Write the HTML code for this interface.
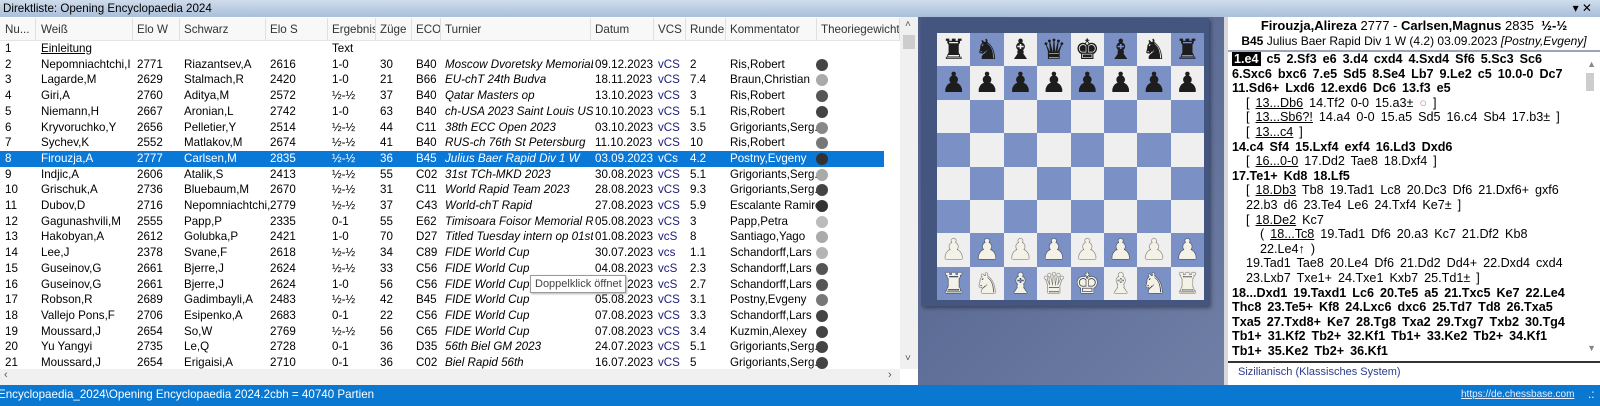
<!DOCTYPE html>
<html><head><meta charset="utf-8"><style>
*{margin:0;padding:0;box-sizing:border-box}
body{width:1600px;height:406px;overflow:hidden;background:#fff;font-family:"Liberation Sans",sans-serif;font-size:11.6px;color:#000;position:relative}
.title{position:absolute;left:0;top:0;width:1600px;height:17px;background:linear-gradient(#cfdcec,#a9bfd9);font-size:11.6px;line-height:17px;padding-left:3px}
.title .r{position:absolute;right:8px;top:0;font-size:12px}
.list{position:absolute;left:0;top:17px;width:918px;height:368px;background:#fff}
.hdr{position:absolute;left:0;top:1px;width:900px;height:23px;background:#f8f8f8;border-bottom:1px solid #e4e4e4}
.hdr span{position:absolute;top:0;line-height:23px;color:#333;border-right:1px solid #e0e0e0;height:23px;overflow:hidden;white-space:nowrap}
.row{position:absolute;left:0;width:884px;height:15.7px;line-height:15.7px;white-space:nowrap}
.row span{position:absolute;top:0;overflow:hidden}
.sel{background:#0a78d7;color:#fff}
.sel .v{color:#fff}
.i{font-style:italic}
.v{color:#1c1c7a}
.dot{position:absolute;width:12px;height:12px;border-radius:50%;top:2px;left:816px}
.vs{position:absolute;left:900px;top:0;width:18px;height:352px;background:#f0f0f0}
.hs{position:absolute;left:0;top:352px;width:900px;height:16px;background:#f0f0f0}
.panel{position:absolute;left:918px;top:17px;width:306px;height:368px;background:linear-gradient(135deg,#4e5d88,#6f7fa6)}
.frame{position:absolute;left:3px;top:1px;width:288px;height:288px;background:#44557f;box-shadow:2px 2px 4px rgba(0,0,0,.4)}
.board{position:absolute;left:19px;top:16px;width:267px;height:267px;display:grid;grid-template-columns:repeat(8,33.4px);grid-template-rows:repeat(8,33.4px)}
.board div{font-family:"DejaVu Sans",sans-serif;font-size:28px;line-height:33px;text-align:center}
.l{background:#efefef}.d{background:#7b90c4}
.b{color:#1d1d1d}.w{color:#f4f2e6;text-shadow:0 0 1px #000,0 0 1px #000}
.nota{position:absolute;left:1224px;top:17px;width:376px;height:368px;background:#fff;border-left:4px solid #d8d8d8}
.nh{text-align:center;font-size:13px;line-height:17px;color:#000;white-space:nowrap}
.mv{position:absolute;left:4px;top:35px;font-family:"Liberation Sans",Arial,sans-serif;font-size:12.6px;line-height:14.6px;word-spacing:2.5px;white-space:nowrap}
.mv .B{font-weight:bold}
.u{text-decoration:underline}
.status{position:absolute;left:0;top:385px;width:1600px;height:21px;background:#0a78d0;color:#fff;line-height:20px;font-size:11.6px}
</style></head><body>
<div class="title">Direktliste: Opening Encyclopaedia 2024<span class="r">▾ ✕</span></div>
<div class="list">
<div class="hdr">
<span style="left:0;width:36px;padding-left:5px">Nu...</span>
<span style="left:36px;width:97px;padding-left:5px">Weiß</span>
<span style="left:133px;width:47px;padding-left:4px">Elo W</span>
<span style="left:180px;width:86px;padding-left:4px">Schwarz</span>
<span style="left:266px;width:62px;padding-left:4px">Elo S</span>
<span style="left:328px;width:48px;padding-left:4px">Ergebnis</span>
<span style="left:376px;width:36px;padding-left:4px">Züge</span>
<span style="left:412px;width:29px;padding-left:4px">ECO</span>
<span style="left:441px;width:150px;padding-left:4px">Turnier</span>
<span style="left:591px;width:63px;padding-left:4px">Datum</span>
<span style="left:654px;width:32px;padding-left:4px">VCS</span>
<span style="left:686px;width:40px;padding-left:4px">Runde</span>
<span style="left:726px;width:91px;padding-left:4px">Kommentator</span>
<span style="left:817px;width:83px;padding-left:4px">Theoriegewicht</span>
</div>
<div id="rows"></div>
<div class="vs"><div style="position:absolute;left:5px;top:2px;font-size:10px;color:#555">˄</div><div style="position:absolute;left:3px;top:18px;width:12px;height:14px;background:#cdcdcd"></div><div style="position:absolute;left:5px;top:336px;font-size:10px;color:#555">˅</div></div>
<div class="hs"><div style="position:absolute;left:4px;top:0;font-size:11px;color:#555">‹</div><div style="position:absolute;left:888px;top:0;font-size:11px;color:#555">›</div></div>
</div>
<div class="panel"><div class="frame"></div>
<div class="board" id="bd"></div></div>
<div class="nota">
<div class="nh" style="margin-top:0;line-height:17px"><b>Firouzja,Alireza</b> 2777 - <b>Carlsen,Magnus</b> 2835 &nbsp;<b>½-½</b></div>
<div class="nh" style="border-bottom:2px solid #9aa6c0;line-height:15px;padding-bottom:1px;font-size:12px"><b>B45</b> Julius Baer Rapid Div 1 W (4.2) 03.09.2023 <i>[Postny,Evgeny]</i></div>
<div class="mv">
<div class="B"><span style="background:#000;color:#fff;padding:0 2px">1.e4</span> c5 2.Sf3 e6 3.d4 cxd4 4.Sxd4 Sf6 5.Sc3 Sc6</div>
<div class="B">6.Sxc6 bxc6 7.e5 Sd5 8.Se4 Lb7 9.Le2 c5 10.0-0 Dc7</div>
<div class="B">11.Sd6+ Lxd6 12.exd6 Dc6 13.f3 e5</div>
<div style="padding-left:14px">[ <span class="u">13...Db6</span> 14.Tf2 0-0 15.a3± <span style="color:#c6a">○</span> ]</div>
<div style="padding-left:14px">[ <span class="u">13...Sb6?!</span> 14.a4 0-0 15.a5 Sd5 16.c4 Sb4 17.b3± ]</div>
<div style="padding-left:14px">[ <span class="u">13...c4</span> ]</div>
<div class="B">14.c4 Sf4 15.Lxf4 exf4 16.Ld3 Dxd6</div>
<div style="padding-left:14px">[ <span class="u">16...0-0</span> 17.Dd2 Tae8 18.Dxf4 ]</div>
<div class="B">17.Te1+ Kd8 18.Lf5</div>
<div style="padding-left:14px">[ <span class="u">18.Db3</span> Tb8 19.Tad1 Lc8 20.Dc3 Df6 21.Dxf6+ gxf6</div>
<div style="padding-left:14px">22.b3 d6 23.Te4 Le6 24.Txf4 Ke7± ]</div>
<div style="padding-left:14px">[ <span class="u">18.De2</span> Kc7</div>
<div style="padding-left:28px">( <span class="u">18...Tc8</span> 19.Tad1 Df6 20.a3 Kc7 21.Df2 Kb8</div>
<div style="padding-left:28px">22.Le4↑ )</div>
<div style="padding-left:14px">19.Tad1 Tae8 20.Le4 Df6 21.Dd2 Dd4+ 22.Dxd4 cxd4</div>
<div style="padding-left:14px">23.Lxb7 Txe1+ 24.Txe1 Kxb7 25.Td1± ]</div>
<div class="B">18...Dxd1 19.Taxd1 Lc6 20.Te5 a5 21.Txc5 Ke7 22.Le4</div>
<div class="B">Thc8 23.Te5+ Kf8 24.Lxc6 dxc6 25.Td7 Td8 26.Txa5</div>
<div class="B">Txa5 27.Txd8+ Ke7 28.Tg8 Txa2 29.Txg7 Txb2 30.Tg4</div>
<div class="B">Tb1+ 31.Kf2 Tb2+ 32.Kf1 Tb1+ 33.Ke2 Tb2+ 34.Kf1</div>
<div class="B">Tb1+ 35.Ke2 Tb2+ 36.Kf1</div>
</div>
<div style="position:absolute;right:4px;top:42px;font-size:9px;color:#888">▲</div>
<div style="position:absolute;right:6px;top:56px;width:8px;height:18px;background:#cdcdcd"></div>
<div style="position:absolute;right:4px;top:326px;font-size:9px;color:#888">▼</div>
<div style="position:absolute;left:0;top:344px;width:372px;border-top:2px solid #333"></div>
<div style="position:absolute;left:10px;top:347px;font-size:11px;line-height:16px;color:#2a3a8c">Sizilianisch (Klassisches System)</div>
</div>
<div style="position:absolute;left:530px;top:275px;width:96px;height:18px;background:#fff;border:1px solid #999;box-shadow:1px 1px 2px rgba(0,0,0,.3);font-size:11px;line-height:16px;padding-left:4px;color:#444">Doppelklick öffnet</div>
<div class="status"><span style="position:absolute;left:-2px">Encyclopaedia_2024\Opening Encyclopaedia 2024.2cbh = 40740 Partien</span><span style="position:absolute;left:1461px;text-decoration:underline;color:#e8f0ff;font-size:10px">https://de.chessbase.com</span><span style="position:absolute;left:1588px">.:</span></div>
<script>
var D=[
["1","<u>Einleitung</u>","","","","Text","","","","","","","",""],
["2","Nepomniachtchi,I","2771","Riazantsev,A","2616","1-0","30","B40","Moscow Dvoretsky MemoriaL.","09.12.2023","vCS","2","Ris,Robert","#444"],
["3","Lagarde,M","2629","Stalmach,R","2420","1-0","21","B66","EU-chT 24th Budva","18.11.2023","vCS","7.4","Braun,Christian","#aaa"],
["4","Giri,A","2760","Aditya,M","2572","½-½","37","B40","Qatar Masters op","13.10.2023","vCS","3","Ris,Robert","#555"],
["5","Niemann,H","2667","Aronian,L","2742","1-0","63","B40","ch-USA 2023 Saint Louis USA","10.10.2023","vCS","5.1","Ris,Robert","#444"],
["6","Kryvoruchko,Y","2656","Pelletier,Y","2514","½-½","44","C11","38th ECC Open 2023","03.10.2023","vCS","3.5","Grigoriants,Serg..","#888"],
["7","Sychev,K","2552","Matlakov,M","2674","½-½","41","B40","RUS-ch 76th St Petersburg","11.10.2023","vCS","10","Ris,Robert","#777"],
["8","Firouzja,A","2777","Carlsen,M","2835","½-½","36","B45","Julius Baer Rapid Div 1 W","03.09.2023","vCs","4.2","Postny,Evgeny","#333"],
["9","Indjic,A","2606","Atalik,S","2413","½-½","55","C02","31st TCh-MKD 2023","30.08.2023","vCS","5.1","Grigoriants,Serg..","#aaa"],
["10","Grischuk,A","2736","Bluebaum,M","2670","½-½","31","C11","World Rapid Team 2023","28.08.2023","vCS","9.3","Grigoriants,Serg..","#444"],
["11","Dubov,D","2716","Nepomniachtchi,I","2779","½-½","37","C43","World-chT Rapid","27.08.2023","vCS","5.9","Escalante Ramire..","#333"],
["12","Gagunashvili,M","2555","Papp,P","2335","0-1","55","E62","Timisoara Foisor Memorial Ra..","05.08.2023","vCS","3","Papp,Petra","#bbb"],
["13","Hakobyan,A","2612","Golubka,P","2421","1-0","70","D27","Titled Tuesday intern op 01st..","01.08.2023","vcS","8","Santiago,Yago","#aaa"],
["14","Lee,J","2378","Svane,F","2618","½-½","34","C89","FIDE World Cup","30.07.2023","vcs","1.1","Schandorff,Lars","#b4b4b4"],
["15","Guseinov,G","2661","Bjerre,J","2624","½-½","33","C56","FIDE World Cup","04.08.2023","vcS","2.3","Schandorff,Lars","#555"],
["16","Guseinov,G","2661","Bjerre,J","2624","1-0","56","C56","FIDE World Cup","04.08.2023","vcS","2.7","Schandorff,Lars","#555"],
["17","Robson,R","2689","Gadimbayli,A","2483","½-½","42","B45","FIDE World Cup","05.08.2023","vCS","3.1","Postny,Evgeny","#777"],
["18","Vallejo Pons,F","2706","Esipenko,A","2683","0-1","22","C56","FIDE World Cup","07.08.2023","vCS","3.3","Schandorff,Lars","#444"],
["19","Moussard,J","2654","So,W","2769","½-½","56","C65","FIDE World Cup","07.08.2023","vCS","3.4","Kuzmin,Alexey","#444"],
["20","Yu Yangyi","2735","Le,Q","2728","0-1","36","D35","56th Biel GM 2023","24.07.2023","vCS","5.1","Grigoriants,Serg..","#444"],
["21","Moussard,J","2654","Erigaisi,A","2710","0-1","36","C02","Biel Rapid 56th","16.07.2023","vCS","5","Grigoriants,Serg..","#444"]];
var X=[5,41,137,184,270,332,380,416,445,595,658,690,730];
var W=[32,95,45,86,60,46,34,28,148,62,31,38,88];
var h="";
D.forEach(function(r,k){
 h+='<div class="row'+(k==7?' sel':'')+'" style="top:'+(24+k*15.7)+'px">';
 for(var c=0;c<13;c++){
  var cls=c==8?'i':(c==10?'v':'');
  h+='<span class="'+cls+'" style="left:'+X[c]+'px;width:'+W[c]+'px">'+r[c]+'</span>';
 }
 if(r[13])h+='<div class="dot" style="background:'+r[13]+'"></div>';
 h+='</div>';
});
document.getElementById('rows').innerHTML=h;
var B=["♜♞♝♛♚♝♞♜","♟♟♟♟♟♟♟♟","        ","        ","        ","        ","♙♙♙♙♙♙♙♙","♖♘♗♕♔♗♘♖"];
var g="";
for(var y=0;y<8;y++)for(var x=0;x<8;x++){
 var ch=B[y][x],sq=(x+y)%2?'d':'l';
 var col=y<2?'b':'w';
 if(y>=6){ch=String.fromCharCode(ch.charCodeAt(0)+6);}
 g+='<div class="'+sq+' '+col+'">'+(ch==' '?'':ch)+'</div>';
}
document.getElementById('bd').innerHTML=g;
</script>
</body></html>
